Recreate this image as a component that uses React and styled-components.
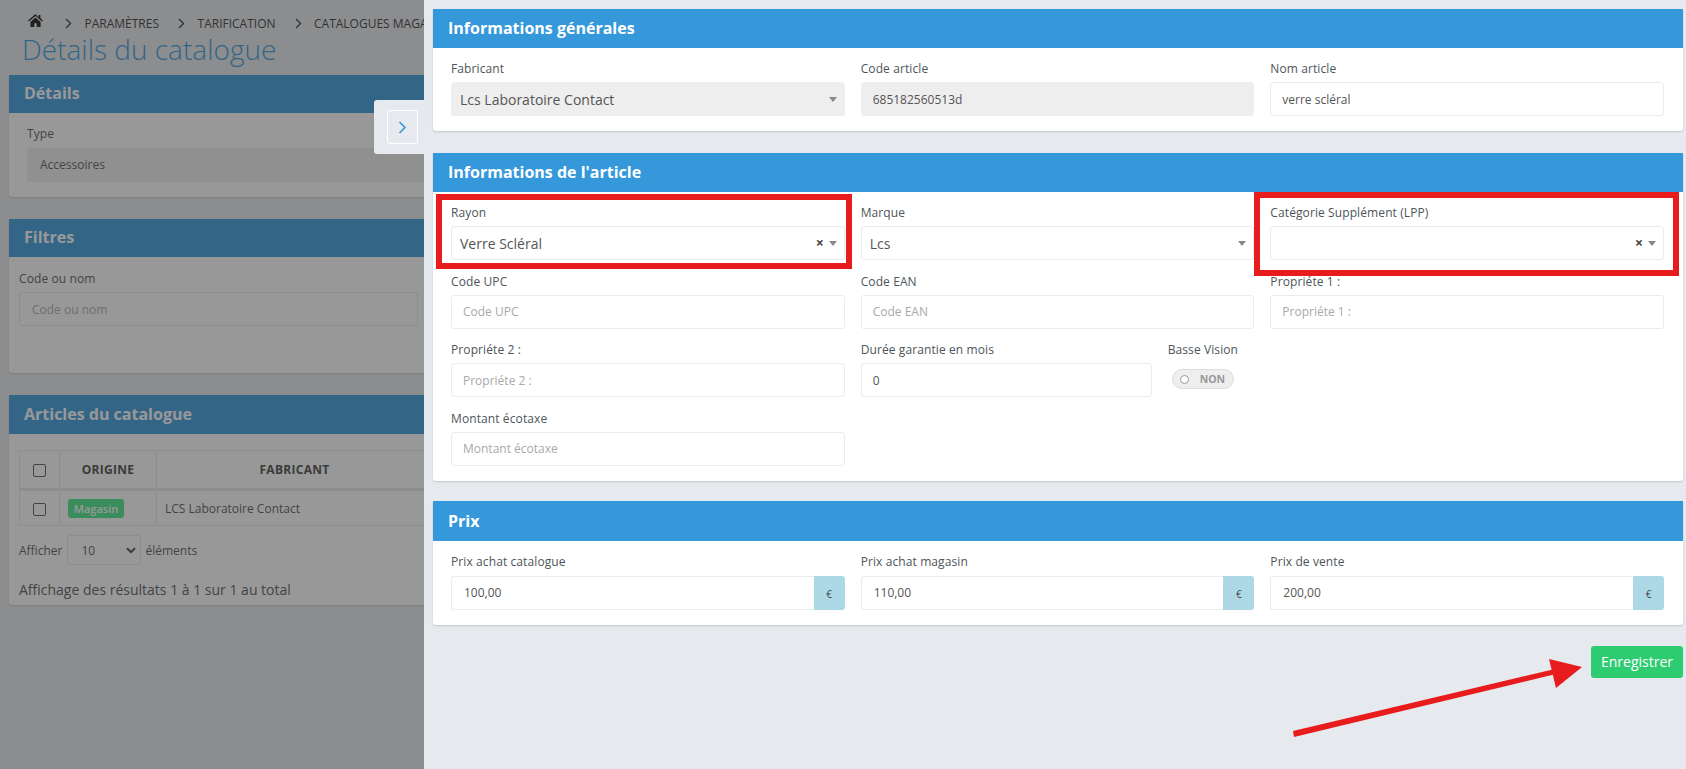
import React from "react";
import styled, { createGlobalStyle } from "styled-components";

const Global = createGlobalStyle`
  html, body { margin: 0; padding: 0; background: #e6e9ed; }
  body { font-family: "Open Sans", "Liberation Sans", sans-serif; font-size: 12px; color: #555; }
  * { box-sizing: border-box; }
`;

const Stage = styled.div`
  position: relative;
  width: 1686px;
  height: 769px;
  overflow: hidden;
  background: #e6e9ed;
`;

/* ---- page behind the drawer ---- */
const Page = styled.div`
  padding-left: 9px;
  width: 600px;
`;
const Breadcrumb = styled.nav`
  display: flex;
  align-items: center;
  height: 21px;
  margin-top: 13px;
  padding-left: 19px;
  white-space: nowrap;
  font-size: 12px;
  color: #333;
`;
const HomeIcon = styled.svg`
  width: 15px;
  height: 13px;
  margin-top: -6px;
  margin-right: 22px;
  flex: none;
`;
const CrumbSep = styled.svg`
  width: 7px;
  height: 11px;
  margin-right: 12.5px;
  flex: none;
`;
const Crumb = styled.span`
  margin-right: 19px;
`;
const Title = styled.h1`
  margin: 0;
  padding-left: 13px;
  height: 41px;
  font-size: 28px;
  font-weight: 300;
  line-height: 30px;
  color: #3498db;
`;
const Card = styled.section`
  background: #fff;
  border-radius: 0 0 3px 3px;
  box-shadow: 0 1px 2px rgba(0, 0, 0, 0.15);
  margin-bottom: ${(p) => p.$gap ?? 22}px;
`;
const CardHead = styled.h2`
  margin: 0;
  height: ${(p) => p.$h ?? 39}px;
  line-height: ${(p) => p.$lh ?? 38}px;
  padding-left: 15px;
  background: #3498db;
  color: #fff;
  font-size: 16px;
  font-weight: 700;
`;
const LeftBody = styled.div`
  padding: ${(p) => p.$pad};
  height: ${(p) => p.$height}px;
`;
const Label = styled.label`
  display: block;
  height: 18px;
  line-height: 18px;
  margin-bottom: 4px;
  font-size: 12px;
  letter-spacing: 0.1px;
  color: #4c5559;
  white-space: nowrap;
`;
const GreyBox = styled.div`
  height: 34px;
  margin-top: 5px;
  line-height: 34px;
  padding-left: 13px;
  border-radius: 3px;
  background: #eee;
  color: #555;
  font-size: 12px;
`;
const LeftInput = styled.input`
  display: block;
  width: 399px;
  height: 34px;
  padding: 0 12px;
  border: 1px solid #e6e9ed;
  border-radius: 3px;
  font: 12px "Open Sans", sans-serif;
  &::placeholder { color: #aaa; }
`;
const Table = styled.table`
  width: 500px;
  border-collapse: collapse;
  table-layout: fixed;
  font-size: 12px;
`;
const Th = styled.th`
  width: ${(p) => p.$w}px;
  height: 39px;
  padding: 0;
  border: 1px solid #e6e9ed;
  border-bottom: 3px solid #e6e9ed;
  text-transform: uppercase;
  letter-spacing: 0.3px;
  font-weight: 700;
  color: #444;
`;
const Td = styled.td`
  height: 36px;
  padding: 0 ${(p) => (p.$center ? 0 : 8)}px;
  text-align: ${(p) => (p.$center ? "center" : "left")};
  border: 1px solid #e6e9ed;
  color: #555;
`;
const Check = styled.input.attrs({ type: "checkbox" })`
  appearance: none;
  display: inline-block;
  width: 13px;
  height: 13px;
  margin: 0;
  vertical-align: middle;
  background: #fff;
  border: 1px solid #555;
  border-radius: 2px;
`;
const Badge = styled.span`
  display: inline-block;
  width: 56px;
  height: 19px;
  line-height: 19px;
  text-align: center;
  border-radius: 3px;
  background: #3fe884;
  color: #fff;
  font-size: 11px;
  font-weight: 600;
`;
const PageSize = styled.div`
  display: flex;
  align-items: center;
  height: 30px;
  margin-top: 9px;
  font-size: 12px;
  color: #555;
`;
const SizeSelect = styled.div`
  display: flex;
  align-items: center;
  justify-content: space-between;
  width: 74px;
  height: 30px;
  margin: 0 4px 0 5px;
  padding: 1px 4px 0 13px;
  border: 1px solid #e6e9ed;
  border-radius: 3px;
  background: #fff;
  svg { width: 10px; height: 7px; }
`;
const Summary = styled.div`
  margin-top: 15px;
  height: 20px;
  line-height: 20px;
  font-size: 14px;
  color: #555;
  white-space: nowrap;
`;

/* ---- overlay and drawer ---- */
const Scrim = styled.div`
  position: absolute;
  inset: 0;
  background: rgba(50, 50, 50, 0.5);
`;
const Drawer = styled.aside`
  position: absolute;
  top: 0;
  bottom: 0;
  left: 424px;
  right: 0;
  padding: 9px 3px 0 9px;
  background: #e6e9ed;
`;
const DrawerTab = styled.div`
  position: absolute;
  left: -50px;
  top: 100px;
  width: 50px;
  height: 54px;
  padding: 10px 6px 10px 13px;
  background: #e6e9ed;
  border-radius: 3px 0 0 3px;
`;
const TabButton = styled.button`
  display: flex;
  align-items: center;
  justify-content: center;
  width: 31px;
  height: 34px;
  padding: 0;
  background: transparent;
  border: 1px solid #fff;
  border-radius: 3px;
  svg { width: 9px; height: 13px; }
`;
const FormBody = styled.div`
  display: grid;
  grid-template-columns: repeat(3, 1fr);
  column-gap: 16px;
  row-gap: 12.5px;
  padding: 12px 19px 15px 18px;
`;
const Field = styled.div`
  min-width: 0;
  grid-column: ${(p) => p.$col ?? "auto"};
`;
const SplitField = styled.div`
  display: grid;
  grid-template-columns: 291px 1fr;
  column-gap: 16px;
`;
const Input = styled.input`
  display: block;
  width: 100%;
  height: 34px;
  padding: 0 11px;
  border: 1.5px solid #e9ecef;
  border-radius: 3px;
  background: ${(p) => (p.disabled ? "#eee" : "#fff")};
  color: #555;
  font: 12px "Open Sans", sans-serif;
  outline: none;
  &:disabled { border-color: #eee; }
  &::placeholder { color: #a9a9a9; opacity: 1; }
`;
const SelectBox = styled.div`
  display: flex;
  align-items: center;
  height: 34px;
  padding: 0 7px 0 8px;
  border: 1.5px solid ${(p) => (p.$disabled ? "#eee" : "#e9ecef")};
  border-radius: 3px;
  background: ${(p) => (p.$disabled ? "#eee" : "#fff")};
  color: #555;
  font-size: 14px;
`;
const SelectValue = styled.span`
  flex: 1;
  min-width: 0;
`;
const Clear = styled.span`
  margin-right: 5px;
  font-size: 14px;
  font-weight: 700;
  line-height: 1;
  color: #444;
`;
const Caret = styled.span`
  width: 0;
  height: 0;
  border-left: 4px solid transparent;
  border-right: 4px solid transparent;
  border-top: 5px solid #888;
`;
const Toggle = styled.div`
  display: flex;
  align-items: center;
  width: 62px;
  height: 20px;
  margin: 10px 0 0 4px;
  padding-left: 7px;
  gap: 11px;
  border-radius: 10px;
  border: 1px solid #ddd;
  background: #eee;
  color: #999;
  font-size: 10.5px;
  font-weight: 700;
`;
const ToggleKnob = styled.span`
  width: 9px;
  height: 9px;
  border-radius: 50%;
  border: 1px solid #999;
  background: #fff;
`;
const InputGroup = styled.div`
  display: flex;
  height: 34px;
  margin-top: 5px;
`;
const GroupInput = styled(Input)`
  flex: 1;
  min-width: 0;
  padding: 0 12px;
  border-right: 0;
  border-radius: 3px 0 0 3px;
`;
const Addon = styled.span`
  width: 31px;
  flex: none;
  padding-top: 1px;
  text-align: center;
  line-height: 34px;
  background: #add8e6;
  border-radius: 0 3px 3px 0;
  color: #444;
  font-size: 10px;
`;
const Footer = styled.div`
  display: flex;
  justify-content: flex-end;
`;
const SaveButton = styled.button`
  width: 92px;
  height: 32px;
  padding: 0;
  border: 0;
  border-radius: 3px;
  background: #2ecc71;
  color: #fff;
  font: 14px "Open Sans", sans-serif;
`;
const Highlight = styled.div`
  position: absolute;
  left: ${(p) => p.$x}px;
  top: ${(p) => p.$y}px;
  width: ${(p) => p.$w}px;
  height: ${(p) => p.$h}px;
  border: 6px solid #e81c1c;
  pointer-events: none;
`;
const ArrowMark = styled.svg`
  position: absolute;
  left: 0;
  top: 0;
  width: 1262px;
  height: 769px;
  pointer-events: none;
`;

const Sep = () => (
  <CrumbSep viewBox="0 0 7 11">
    <path d="M1 1l4.5 4.5L1 10" fill="none" stroke="#333" strokeWidth="1.4" />
  </CrumbSep>
);

const Text = ({ label, placeholder, value, disabled, col }) => (
  <Field $col={col}>
    <Label>{label}</Label>
    <Input placeholder={placeholder} defaultValue={value} disabled={disabled} />
  </Field>
);

const Select = ({ label, value, clear, disabled }) => (
  <Field>
    <Label>{label}</Label>
    <SelectBox $disabled={disabled}>
      <SelectValue>{value}</SelectValue>
      {clear && <Clear>×</Clear>}
      <Caret />
    </SelectBox>
  </Field>
);

const Price = ({ label, value }) => (
  <Field>
    <Label>{label}</Label>
    <InputGroup>
      <GroupInput defaultValue={value} />
      <Addon>€</Addon>
    </InputGroup>
  </Field>
);

export default function App() {
  return (
    <Stage>
      <Global />
      <Page>
        <Breadcrumb>
          <HomeIcon viewBox="0 0 15 13">
            <path
              d="M7.5 0L0 6.6l.9 1L7.5 1.9l6.6 5.7.9-1-2.6-2.3V1h-2v2.5zM2.4 7.9V13h3.9V9.2h2.4V13h3.9V7.9L7.5 3.4z"
              fill="#111"
            />
          </HomeIcon>
          <Sep />
          <Crumb>PARAMÈTRES</Crumb>
          <Sep />
          <Crumb>TARIFICATION</Crumb>
          <Sep />
          <Crumb>CATALOGUES MAGASIN</Crumb>
        </Breadcrumb>
        <Title>Détails du catalogue</Title>

        <Card>
          <CardHead $h={38} $lh={37}>Détails</CardHead>
          <LeftBody $pad="12px 18px 0" $height={84}>
            <Label>Type</Label>
            <GreyBox>Accessoires</GreyBox>
          </LeftBody>
        </Card>

        <Card>
          <CardHead $h={38} $lh={37}>Filtres</CardHead>
          <LeftBody $pad="13px 10px 0" $height={116}>
            <Label>Code ou nom</Label>
            <LeftInput placeholder="Code ou nom" />
          </LeftBody>
        </Card>

        <Card>
          <CardHead>Articles du catalogue</CardHead>
          <LeftBody $pad="16px 10px 0" $height={171}>
            <Table>
              <thead>
                <tr>
                  <Th $w={40}><Check /></Th>
                  <Th $w={97}>Origine</Th>
                  <Th $w={276}>Fabricant</Th>
                  <Th $w={87}></Th>
                </tr>
              </thead>
              <tbody>
                <tr>
                  <Td $center><Check /></Td>
                  <Td><Badge>Magasin</Badge></Td>
                  <Td>LCS Laboratoire Contact</Td>
                  <Td></Td>
                </tr>
              </tbody>
            </Table>
            <PageSize>
              <span>Afficher</span>
              <SizeSelect>
                <span>10</span>
                <svg viewBox="0 0 10 7">
                  <path d="M1 1.2l4 4 4-4" fill="none" stroke="#444" strokeWidth="2" />
                </svg>
              </SizeSelect>
              <span>éléments</span>
            </PageSize>
            <Summary>Affichage des résultats 1 à 1 sur 1 au total</Summary>
          </LeftBody>
        </Card>
      </Page>

      <Scrim />

      <Drawer>
        <DrawerTab>
          <TabButton aria-label="Fermer">
            <svg viewBox="0 0 9 13">
              <path d="M1.5 1l5.5 5.5L1.5 12" fill="none" stroke="#3498db" strokeWidth="1.6" />
            </svg>
          </TabButton>
        </DrawerTab>

        <Card>
          <CardHead>Informations générales</CardHead>
          <FormBody>
            <Select label="Fabricant" value="Lcs Laboratoire Contact" disabled />
            <Text label="Code article" value="685182560513d" disabled />
            <Text label="Nom article" value="verre scléral" />
          </FormBody>
        </Card>

        <Card $gap={20}>
          <CardHead>Informations de l'article</CardHead>
          <FormBody>
            <Select label="Rayon" value="Verre Scléral" clear />
            <Select label="Marque" value="Lcs" />
            <Select label="Catégorie Supplément (LPP)" clear />
            <Text label="Code UPC" placeholder="Code UPC" />
            <Text label="Code EAN" placeholder="Code EAN" />
            <Text label="Propriéte 1 :" placeholder="Propriéte 1 :" />
            <Text label="Propriéte 2 :" placeholder="Propriéte 2 :" />
            <SplitField>
              <Text label="Durée garantie en mois" value="0" />
              <Field>
                <Label>Basse Vision</Label>
                <Toggle>
                  <ToggleKnob />
                  NON
                </Toggle>
              </Field>
            </SplitField>
            <Text label="Montant écotaxe" placeholder="Montant écotaxe" col="1" />
          </FormBody>
        </Card>

        <Card $gap={21}>
          <CardHead $h={40} $lh={40}>Prix</CardHead>
          <FormBody>
            <Price label="Prix achat catalogue" value="100,00" />
            <Price label="Prix achat magasin" value="110,00" />
            <Price label="Prix de vente" value="200,00" />
          </FormBody>
        </Card>

        <Footer>
          <SaveButton>Enregistrer</SaveButton>
        </Footer>

        <Highlight $x={12} $y={194} $w={416} $h={75} />
        <Highlight $x={830} $y={192} $w={425} $h={84} />
        <ArrowMark viewBox="0 0 1262 769">
          <polygon points="869,731 1131,669 1132,674 870,737" fill="#e81c1c" />
          <polygon points="1125,659 1158,667 1132,688" fill="#e81c1c" />
        </ArrowMark>
      </Drawer>
    </Stage>
  );
}
